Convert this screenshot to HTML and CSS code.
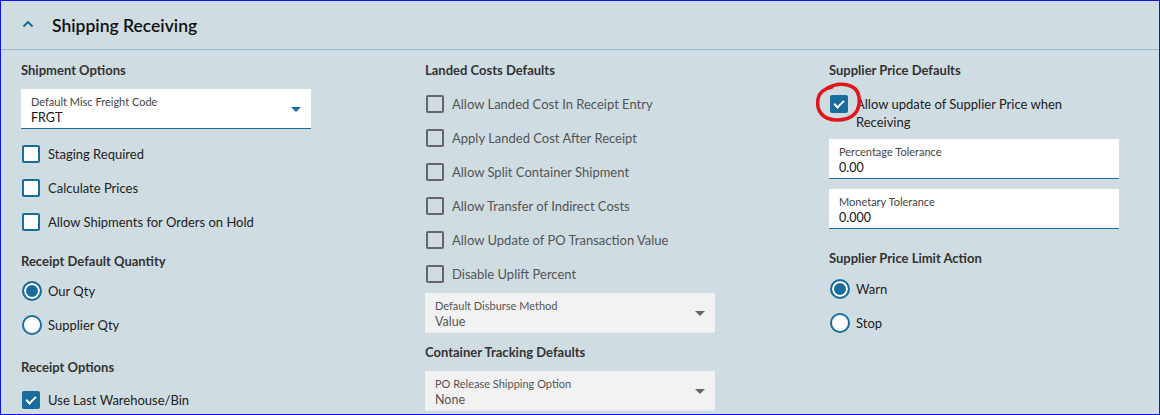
FILE: index.html
```html
<!DOCTYPE html>
<html lang="en">
<head>
    <meta charset="UTF-8">
    <meta name="viewport" content="width=device-width, initial-scale=1.0">
    <title>Shipping Receiving</title>
    <link rel="stylesheet" href="styles.css">
</head>
<body>
    <div class="page">
        <div class="header">
            <svg class="chev" width="12" height="8" viewBox="0 0 12 8"><path d="M1.5 6.5 L6 2 L10.5 6.5" fill="none" stroke="#1b6b96" stroke-width="2"/></svg>
            <div class="title">Shipping Receiving</div>
        </div>
        <div class="cols">
            <!-- column 1 -->
            <div class="col">
                <div class="head">Shipment Options</div>
                <div class="field mt9">
                    <div class="flabel">Default Misc Freight Code</div>
                    <div class="fvalue">FRGT</div>
                    <span class="caret"></span>
                </div>
                <div class="row mt8"><span class="cb"></span><span class="txt">Staging Required</span></div>
                <div class="row"><span class="cb"></span><span class="txt">Calculate Prices</span></div>
                <div class="row"><span class="cb"></span><span class="txt">Allow Shipments for Orders on Hold</span></div>
                <div class="head mt12">Receipt Default Quantity</div>
                <div class="row mt3"><span class="rd on"></span><span class="txt">Our Qty</span></div>
                <div class="row"><span class="rd"></span><span class="txt">Supplier Qty</span></div>
                <div class="head mt15">Receipt Options</div>
                <div class="row mt6"><span class="cb on"></span><span class="txt">Use Last Warehouse/Bin</span></div>
            </div>
            <!-- column 2 -->
            <div class="col">
                <div class="head">Landed Costs Defaults</div>
                <div class="row mt7 off"><span class="cb"></span><span class="txt">Allow Landed Cost In Receipt Entry</span></div>
                <div class="row off"><span class="cb"></span><span class="txt">Apply Landed Cost After Receipt</span></div>
                <div class="row off"><span class="cb"></span><span class="txt">Allow Split Container Shipment</span></div>
                <div class="row off"><span class="cb"></span><span class="txt">Allow Transfer of Indirect Costs</span></div>
                <div class="row off"><span class="cb"></span><span class="txt">Allow Update of PO Transaction Value</span></div>
                <div class="row off"><span class="cb"></span><span class="txt">Disable Uplift Percent</span></div>
                <div class="field dis mt2">
                    <div class="flabel">Default Disburse Method</div>
                    <div class="fvalue">Value</div>
                    <span class="caret"></span>
                </div>
                <div class="head mt9">Container Tracking Defaults</div>
                <div class="field dis mt9">
                    <div class="flabel">PO Release Shipping Option</div>
                    <div class="fvalue">None</div>
                    <span class="caret"></span>
                </div>
            </div>
            <!-- column 3 -->
            <div class="col">
                <div class="head">Supplier Price Defaults</div>
                <div class="row wrap mt7"><span class="cb on"></span><span class="txt">Allow update of Supplier Price when Receiving</span></div>
                <div class="field">
                    <div class="flabel">Percentage Tolerance</div>
                    <div class="fvalue">0.00</div>
                </div>
                <div class="field mt10">
                    <div class="flabel">Monetary Tolerance</div>
                    <div class="fvalue">0.000</div>
                </div>
                <div class="head mt19">Supplier Price Limit Action</div>
                <div class="row mt4"><span class="rd on"></span><span class="txt">Warn</span></div>
                <div class="row"><span class="rd"></span><span class="txt">Stop</span></div>
            </div>
        </div>
        <!-- hand drawn mark -->
        <svg class="mark" width="60" height="60" viewBox="0 0 60 60">
            <path d="M22 9 C35 1 53 3 55 17 C57 31 49 40 33 40 C19 40 12 31 14 19 C15 13 19 9 28 7" fill="none" stroke="#e0161e" stroke-width="3.5" stroke-linecap="round"/>
        </svg>
    </div>
</body>
</html>
```

FILE: styles.css
```css
*{
    margin: 0;
    padding: 0;
    box-sizing: border-box;
}
body{
    font-family: "Lato", "Noto Sans", sans-serif;
    color: #222;
}
.page{
    position: relative;
    width: 1160px;
    height: 415px;
    border: 1px solid #1010f0;
    background: #cfdce1;
    overflow: hidden;
}
.header{
    height: 49px;
    border-bottom: 1px solid #9ab8c6;
    display: flex;
    align-items: center;
    padding-left: 21px;
}
.chev{
    margin-right: 18px;
    margin-top: -2px;
}
.title{
    font-size: 17.5px;
    font-weight: 600;
    color: #111;
}
.cols{
    display: grid;
    grid-template-columns: repeat(3, 372px);
    column-gap: 32px;
    padding: 10px 0 0 20px;
}
.head{
    height: 20px;
    line-height: 20px;
    font-size: 13px;
    font-weight: 700;
    color: #333;
}
.field{
    position: relative;
    width: 290px;
    height: 40px;
    background: #fff;
    border-bottom: 1px solid #1a6c9c;
    padding: 5px 0 0 10px;
}
.field.dis{
    background: #f2f2f2;
    border-bottom: 1px solid #e4e8ea;
}
.flabel{
    font-size: 11px;
    line-height: 16px;
    color: #444;
}
.fvalue{
    font-size: 12.5px;
    line-height: 16px;
    color: #111;
}
.dis .flabel, .dis .fvalue{
    color: #555;
}
.caret{
    position: absolute;
    right: 10px;
    top: 18px;
    border-left: 5px solid transparent;
    border-right: 5px solid transparent;
    border-top: 5px solid #1a6c9c;
}
.dis .caret{
    border-top-color: #666;
}
.row{
    display: flex;
    align-items: center;
    height: 34px;
    font-size: 13px;
}
.row .txt{
    margin-left: 8px;
}
.row.off{
    color: #555;
}
.row.wrap{
    height: auto;
    align-items: flex-start;
    padding: 8px 0;
    line-height: 18px;
    width: 290px;
}
.cb{
    width: 18px;
    height: 18px;
    flex: none;
    margin-left: 1px;
    border: 2px solid #1a6c9c;
    border-radius: 2px;
    background: #fff;
    position: relative;
}
.off .cb{
    border-color: #666;
    background: transparent;
}
.cb.on{
    background: #1a6c9c;
}
.cb.on:after{
    content: "";
    position: absolute;
    left: 4px;
    top: 1px;
    width: 4px;
    height: 8px;
    border-right: 2px solid #fff;
    border-bottom: 2px solid #fff;
    transform: rotate(45deg);
}
.rd{
    width: 20px;
    height: 20px;
    flex: none;
    margin-left: 1px;
    border: 2px solid #1a6c9c;
    border-radius: 50%;
    background: #fff;
}
.rd.on{
    background: #1a6c9c;
    box-shadow: inset 0 0 0 2px #fff;
}
.row .rd + .txt{
    margin-left: 6px;
}
.mark{
    position: absolute;
    left: 803px;
    top: 79px;
}
.mt2{ margin-top: 2px; }
.mt3{ margin-top: 3px; }
.mt4{ margin-top: 4px; }
.mt6{ margin-top: 6px; }
.mt7{ margin-top: 7px; }
.mt8{ margin-top: 8px; }
.mt9{ margin-top: 9px; }
.mt10{ margin-top: 10px; }
.mt12{ margin-top: 12px; }
.mt15{ margin-top: 15px; }
.mt19{ margin-top: 19px; }
```
